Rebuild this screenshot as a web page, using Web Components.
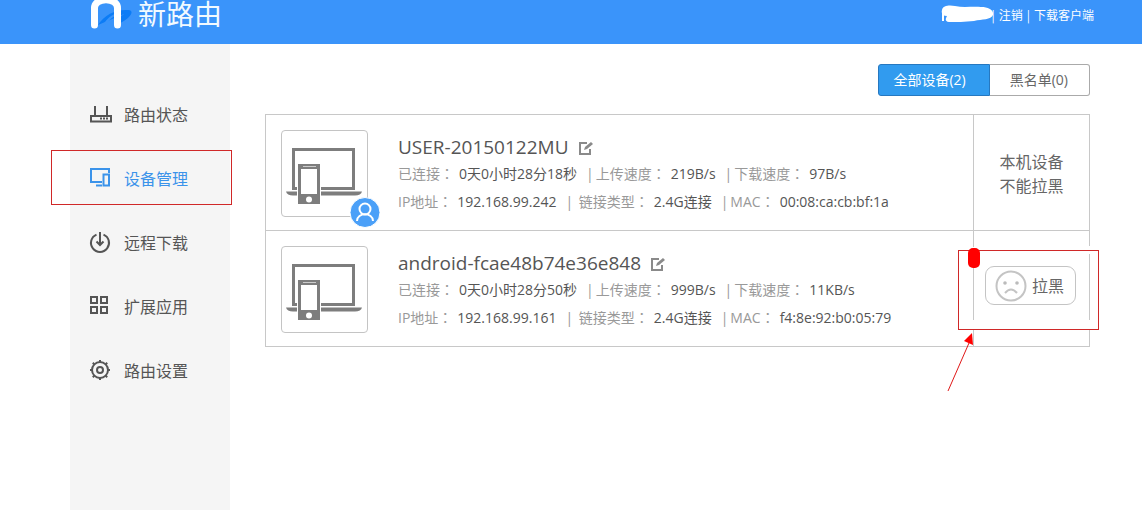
<!DOCTYPE html>
<html lang="zh-CN">
<head>
<meta charset="utf-8">
<title>新路由</title>
<style>
body { margin: 0; background: #fff; color: #555; font: 14px/28px "Open Sans", "Noto Sans CJK SC", sans-serif; }
</style>
</head>
<body>
<router-app></router-app>
<script>
const define = (name, html, setup) => customElements.define(name, class extends HTMLElement {
  constructor() {
    super();
    this.attachShadow({ mode: "open" }).innerHTML = html;
  }
  connectedCallback() { if (setup) setup(this, this.shadowRoot); }
});

const icons = {
  router: '<path d="M1 13h20v5.500H1zM5 3v9M17 3v9M10 15.500h2M13 15.500h2M16 15.500h2"/>',
  devices: '<path d="M12 15H1V2h18v4M6 18.500h6M13.500 7.500H19V18.500h-5.500z"/>',
  download: '<path d="M6.500 3.600a9 9 0 1 0 7 0M10 1v12M6.500 10.500l3.500 3.500 3.500-3.500"/>',
  apps: '<path d="M1 2h6v6H1zM11 2h6v6h-6zM1 12h6v6H1zM11 12h6v6h-6z"/>',
  settings: '<g transform="translate(0 1)"><circle cx="10" cy="10" r="8"/><circle cx="10" cy="10" r="3"/><path d="M10 0v2M10 18v2M0 10h2M18 10h2M2.800 2.800l1.400 1.400M15.800 15.800l1.400 1.400M2.800 17.200l1.400-1.400M15.800 4.200l1.400-1.400"/></g>'
};

define("top-bar", `
<style>
:host { display: block; background: #3a94fa; color: #fff; }
header { display: flex; justify-content: space-between; height: 44px; padding: 0 48px 0 91px; }
.brand { display: flex; align-items: flex-start; gap: 3px; color: #f2faff; font: 28px/32px "Liberation Sans", "Noto Sans CJK SC", sans-serif; text-decoration: none; }
nav { display: flex; gap: 4px; font: 12px/30px "Noto Sans CJK SC", sans-serif; }
nav svg { margin-right: -6px; }
nav a { color: #fff; text-decoration: none; }
</style>
<header>
  <a class="brand" href="#"><svg width="44" height="30" fill="none" aria-hidden="true">
    <path d="M7 25C14 14 25 9 38 10c4 1 3 4-1 8-4 3-8 6-14 7 2-4 5-7 10-11" fill="#0c7cf6"/>
    <path d="M13 25c4-6 9-10 14-11" stroke="#3a94fa" stroke-width="2"/>
    <path d="M3.500 25V8c0-11 23-11 23 0v17" stroke="#fff" stroke-width="7" stroke-linecap="round"/>
  </svg><span>新路由</span></a>
  <nav>
    <svg width="52" height="26" aria-hidden="true"><path d="M1 10c1-5 8-5 13-4 9 2 18 0 26 1 9 0 13 4 12 8-2 5-11 4-19 6-9 1-18 1-25 1C3 21 5 18 6 16c-4 0-6-2-5-6zM1 13h2v8H1z" fill="#fff"/></svg>
    <span>|</span><a href="#">注销</a><span>|</span><a href="#">下载客户端</a>
  </nav>
</header>`);

define("nav-item", `
<style>
:host { display: block; position: relative; color: #555; }
:host([active]) { color: #3b93ea; }
a { display: flex; align-items: center; height: 64px; padding-left: 20px; color: inherit; text-decoration: none; font-size: 16px; }
svg { width: 34px; height: 24px; fill: none; stroke: currentColor; stroke-width: 2; overflow: visible; flex: none; }
</style>
<a href="#"><svg viewBox="0 0 34 24" aria-hidden="true"></svg><slot></slot></a><slot name="mark"></slot>`,
(host, root) => { root.querySelector("svg").innerHTML = icons[host.getAttribute("icon")]; });

define("callout-frame", `
<style>
:host { display: block; position: absolute; box-sizing: border-box; border: 1px solid #d02828; pointer-events: none; }
</style><slot></slot>`);

define("side-nav", `
<style>
:host { display: block; background: #f5f5f5; padding-top: 39px; }
callout-frame { inset: 3px -2px 6px -19px; }
</style>
<nav>
  <nav-item icon="router">路由状态</nav-item>
  <nav-item icon="devices" active>设备管理<callout-frame slot="mark"></callout-frame></nav-item>
  <nav-item icon="download">远程下载</nav-item>
  <nav-item icon="apps">扩展应用</nav-item>
  <nav-item icon="settings">路由设置</nav-item>
</nav>`);

define("filter-tabs", `
<style>
:host { display: flex; justify-content: flex-end; }
button { height: 32px; margin: 0; padding: 0 21px 0 20px; font: inherit; line-height: 28px; color: #666; background: #fff; border: 1px solid #aaa; border-left: 0; border-radius: 0 3px 3px 0; }
button.on { padding: 0 23px 0 14px; color: #fff; background: #319bef; border: 1px solid #2678c0; border-radius: 3px 0 0 3px; }
</style>
<button class="on" type="button">全部设备(2)</button><button type="button">黑名单(0)</button>`);

define("device-thumb", `
<style>
:host { display: block; position: relative; width: 85px; height: 85px; border: 1px solid #c4c4c4; border-radius: 4px; }
svg { display: block; }
.me { position: absolute; right: -14px; bottom: -12px; display: none; }
:host([me]) .me { display: block; }
</style>
<svg width="85" height="85" aria-hidden="true">
  <path d="M11.500 18.500h60v39h-60z" fill="none" stroke="#7d7d7d" stroke-width="3"/>
  <path d="M4 60.500h76q-1 4-7 4H11q-6 0-7-4z" fill="#7d7d7d"/>
  <path d="M15 32h24v42H15z" fill="#fff"/><path d="M16 33h22v40H16z" fill="#7d7d7d"/>
  <path d="M19 38h16v25H19z" fill="#fff"/><path d="M21 35.500h13" stroke="#ccc"/><circle cx="27" cy="68.500" r="3" fill="#fff"/>
</svg>
<svg class="me" width="32" height="32" aria-label="本机">
  <circle cx="16" cy="16.500" r="15" fill="#4ba0f8" stroke="#fff"/>
  <g fill="none" stroke="#fff" stroke-width="2"><circle cx="16" cy="13" r="5.500"/><path d="M8 25c0-9 16-9 16 0"/></g>
</svg>`);

define("info-field", `
<style>
:host { display: flex; gap: 5px; white-space: pre; }
:host(:not(:first-child))::before { content: "|"; margin: 0 -3px 0 9px; color: #999; }
.label { color: #999; }
i { font: 14px "Noto Sans CJK TC", sans-serif; line-height: 1px; }
</style><span class="label"><span></span><i lang="zh-TW">：</i></span><slot></slot>`,
(host, root) => { root.querySelector(".label span").textContent = host.getAttribute("label"); });

define("device-row", `
<style>
:host { display: grid; grid-template-columns: minmax(0, 1fr) 116px; border-bottom: 1px solid #c8c8c8; }
.main { display: flex; gap: 30px; padding: 15px; height: 85px; }
.info { padding-top: 2px; }
h2 { display: flex; align-items: center; gap: 10px; height: 28px; margin: 0; font-size: 19px; font-weight: 400; line-height: 32px; }
h2 slot { display: block; padding-top: 2px; }
.edit { display: flex; padding: 4px 0 0; border: 0; background: none; }
.line { display: flex; white-space: nowrap; }
.action { position: relative; display: flex; align-items: center; justify-content: center; border-left: 1px solid #c8c8c8; font-size: 16px; line-height: 24px; text-align: center; color: #666; }
</style>
<div class="main">
  <device-thumb></device-thumb>
  <div class="info">
    <h2><slot name="name"></slot><button class="edit" type="button" aria-label="编辑名称"><svg width="14" height="14" fill="none" stroke="#8a8a8a" stroke-width="2"><path d="M8 2H1v11h10V8"/><path d="M5 9l1-3 6-5 2 2-6 5z" fill="#8a8a8a" stroke="none"/></svg></button></h2>
    <div class="line"><slot name="traffic"></slot></div>
    <div class="line"><slot name="network"></slot></div>
  </div>
</div>
<div class="action"><slot name="action"></slot></div>`,
(host, root) => { if (host.hasAttribute("me")) root.querySelector("device-thumb").setAttribute("me", ""); });

define("block-button", `
<style>
:host { display: block; padding-bottom: 6px; }
button { display: flex; align-items: center; gap: 5px; height: 39px; margin-right: 2px; padding: 0 11px 0 9px; border: 1px solid #c4c4c4; border-radius: 9px; background: #fff; color: #666; font: inherit; }
</style>
<button type="button"><svg width="32" height="32" fill="none" stroke="#c4c4c4" stroke-width="2" aria-hidden="true"><circle cx="16" cy="16" r="14.500"/><path d="M10 23q6-7 12 0"/><g fill="#bbb" stroke="none"><circle cx="10" cy="13" r="1.800"/><circle cx="22" cy="13" r="1.800"/></g></svg><slot></slot></button>`);

define("arrow-mark", `
<style>
:host { display: block; position: absolute; left: -27px; top: 15px; pointer-events: none; }
svg { display: block; overflow: visible; }
</style>
<svg width="146" height="146" aria-hidden="true">
  <path d="M26.500 1v4M142.500 0v8M26.500 74v9M142.500 74v9" stroke="#fff" stroke-width="1"/>
  <rect x="11.500" y="4.500" width="140" height="79" fill="none" stroke="#d02828"/>
  <rect x="21" y="2" width="12" height="20" rx="5" fill="#f00"/>
  <path d="M1 145L22 97" stroke="#e01818"/><path d="M25 87l1 12-9-4z" fill="#f00"/>
</svg>`);

define("detail-line", `<style>:host { display: flex; }</style><slot></slot>`);

define("device-list", `
<style>
:host { display: block; border: 1px solid #c8c8c8; border-bottom: 0; }
p { margin: 0; padding-top: 2px; }
</style>
<device-row me>
  <span slot="name">USER-20150122MU</span>
  <detail-line slot="traffic"><info-field label="已连接">0天0小时28分18秒</info-field><info-field label="上传速度">219B/s</info-field><info-field label="下载速度">97B/s</info-field></detail-line>
  <detail-line slot="network"><info-field label="IP地址">192.168.99.242</info-field><info-field label=" 链接类型">2.4G连接</info-field><info-field label="MAC">00:08:ca:cb:bf:1a</info-field></detail-line>
  <p slot="action">本机设备<br>不能拉黑</p>
</device-row>
<device-row>
  <span slot="name">android-fcae48b74e36e848</span>
  <detail-line slot="traffic"><info-field label="已连接">0天0小时28分50秒</info-field><info-field label="上传速度">999B/s</info-field><info-field label="下载速度">11KB/s</info-field></detail-line>
  <detail-line slot="network"><info-field label="IP地址">192.168.99.161</info-field><info-field label=" 链接类型">2.4G连接</info-field><info-field label="MAC">f4:8e:92:b0:05:79</info-field></detail-line>
  <block-button slot="action">拉黑</block-button>
  <arrow-mark slot="action"></arrow-mark>
</device-row>`);

define("router-app", `
<style>
:host { display: flex; flex-direction: column; min-height: 100vh; }
.page { flex: 1; display: grid; grid-template-columns: 160px minmax(0, 1fr); gap: 35px; padding: 0 52px 0 70px; }
main { display: flex; flex-direction: column; gap: 18px; padding-top: 20px; }
</style>
<top-bar></top-bar>
<div class="page">
  <side-nav></side-nav>
  <main><filter-tabs></filter-tabs><device-list></device-list></main>
</div>`);
</script>
</body>
</html>
